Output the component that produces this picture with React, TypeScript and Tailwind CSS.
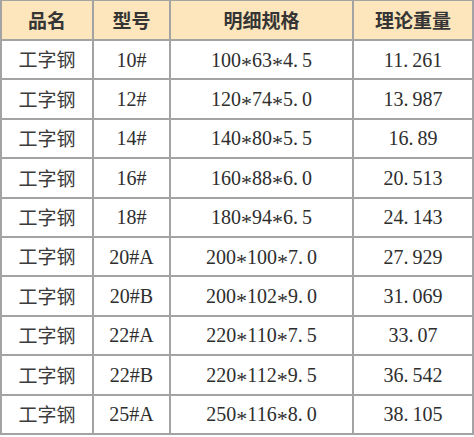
const rows: [string, string, string][] = [
  ["10#", "100*63*4.5", "11.261"],
  ["12#", "120*74*5.0", "13.987"],
  ["14#", "140*80*5.5", "16.89"],
  ["16#", "160*88*6.0", "20.513"],
  ["18#", "180*94*6.5", "24.143"],
  ["20#A", "200*100*7.0", "27.929"],
  ["20#B", "200*102*9.0", "31.069"],
  ["22#A", "220*110*7.5", "33.07"],
  ["22#B", "220*112*9.5", "36.542"],
  ["25#A", "250*116*8.0", "38.105"],
];

const headers = ["品名", "型号", "明细规格", "理论重量"];

const cjk = "font-['Noto_Sans_CJK_SC',sans-serif]";
const num = "font-['Liberation_Serif','Noto_Sans_CJK_SC',serif]";

// SimSun-like spacing: the dot is half-width, the star sits mid-line
function Num({ text }: { text: string }) {
  return (
    <span className="whitespace-nowrap">
      {text.split("").map((ch, i) =>
        ch === "." ? (
          <span key={i} className="tracking-[4px]">.</span>
        ) : ch === "*" ? (
          <span key={i} className="inline-block translate-y-[5px] text-[22px] leading-none">*</span>
        ) : (
          <span key={i}>{ch}</span>
        )
      )}
    </span>
  );
}

export default function App() {
  return (
    <div className="h-[437px] w-[474px] bg-white">
      <div className="grid h-[435px] grid-cols-[90px_75px_181px_118px] grid-rows-[38px_repeat(10,minmax(0,1fr))] gap-[2px] bg-[#a3a3a3] px-[2px] pt-px pb-[2px]">
        {headers.map((h) => (
          <div
            key={h}
            className={`flex items-center justify-center bg-[#fde6bb] text-[19px] font-bold text-[#353535] ${cjk}`}
          >
            {h}
          </div>
        ))}
        {rows.map(([model, spec, weight]) => (
          <div key={model} className="contents">
            <div className={`flex items-center justify-center bg-white text-[19px] text-[#3b3b3b] ${cjk}`}>
              工字钢
            </div>
            <div className={`flex items-center justify-center bg-white text-[20px] text-[#2e2e2e] ${num}`}>
              <Num text={model} />
            </div>
            <div className={`flex items-center justify-center bg-white text-[20px] text-[#2e2e2e] ${num}`}>
              <Num text={spec} />
            </div>
            <div className={`flex items-center justify-center bg-white text-[20px] text-[#2e2e2e] ${num}`}>
              <Num text={weight} />
            </div>
          </div>
        ))}
      </div>
    </div>
  );
}
